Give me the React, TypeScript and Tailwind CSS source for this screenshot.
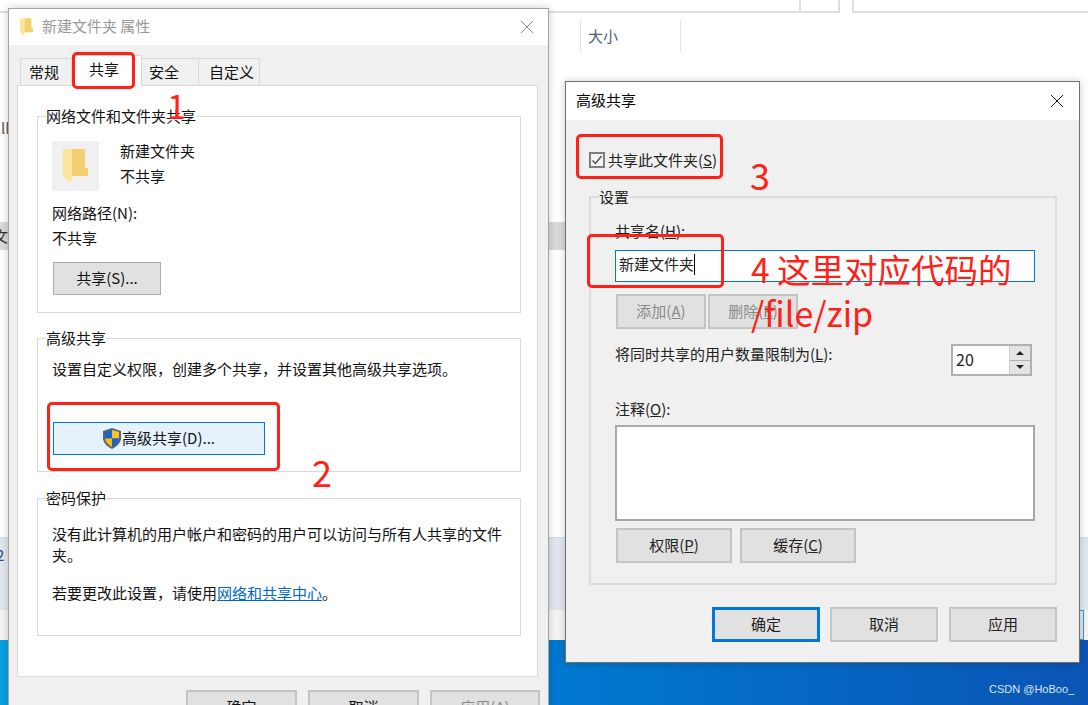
const fontClass = "font-['Noto_Sans_CJK_SC','Liberation_Sans',sans-serif]";

function FolderIcon({ className }: { className: string }) {
  return (
    <svg viewBox="0 0 25 34" className={className}>
      <path d="M8 0 H22 V18 L25 20 V27 H8 Z" fill="#f3d06f" />
      <path d="M0 0 H8 L9 2 V26 L8 34 L0 27 Z" fill="#fbe59a" />
    </svg>
  );
}

function ShieldIcon() {
  return (
    <svg viewBox="0 0 18 21" className="w-[18px] h-[21px] shrink-0">
      <path d="M9 0 L18 3 V11 Q17 17 9 21 Q1 17 0 11 V3 Z" fill="#5a6470" />
      <path d="M9 2 L2 4 V10.5 H9 Z" fill="#1567c0" />
      <path d="M9 2 L16 4 V10.5 H9 Z" fill="#fac42e" />
      <path d="M2 10.5 H9 V19 Q3 16 2 10.5 Z" fill="#f7bc20" />
      <path d="M16 10.5 H9 V19 Q15 16 16 10.5 Z" fill="#1567c0" />
    </svg>
  );
}

function CloseIcon({ color }: { color: string }) {
  return (
    <svg viewBox="0 0 14 14" className="w-[14px] h-[14px]">
      <path d="M1 1 L13 13 M13 1 L1 13" stroke={color} strokeWidth="1" fill="none" />
    </svg>
  );
}

function GroupBox({ title, className, children }: { title: string; className: string; children: React.ReactNode }) {
  return (
    <div className={`relative border ${className}`}>
      <span className="absolute left-[8px] top-[-12px] h-[22px] leading-[22px] bg-inherit">{title}</span>
      {children}
    </div>
  );
}

function GrayButton({ className, children }: { className: string; children: React.ReactNode }) {
  return (
    <div className={`flex items-center justify-center bg-[#e1e1e1] border-2 border-[#c4c4c4] ${className}`}>
      {children}
    </div>
  );
}

function RedBox({ className }: { className: string }) {
  return <div className={`absolute border-[3px] border-[#ff2116] rounded-[5px] ${className}`} />;
}

function RedText({ className, children }: { className: string; children: React.ReactNode }) {
  return <div className={`absolute text-[#ff2116] whitespace-nowrap ${className}`}>{children}</div>;
}

// 背景的资源管理器和桌面
function Backdrop() {
  return (
    <div className="flex flex-col h-full">
      <div className="h-[13px] shrink-0 flex">
        <div className="w-[840px] border-b-2 border-r-2 border-[#dedede] flex justify-end">
          <div className="w-[39px] border-l-2 border-[#dedede]" />
        </div>
        <div className="ml-[12px] flex-1 border-b-2 border-l-2 border-[#dedede]" />
      </div>
      <div className="h-[209px] shrink-0 pt-[7px] pl-[580px] relative">
        <span className="absolute left-[1px] top-[104px] text-[15px] leading-[22px] text-[#555555]">ll</span>
        <div className="w-[101px] h-[32px] border-x border-[#e5e5e5] pl-[7px] leading-[32px] text-[15px] text-[#4c607a]">
          大小
        </div>
      </div>
      <div className="h-[28px] w-[570px] shrink-0 bg-[#d9d9d9] text-[15px] leading-[28px] text-[#333] overflow-hidden">
        <span className="ml-[-7px]">文</span>
      </div>
      <div className="h-[287px] shrink-0" />
      <div className="h-[73px] shrink-0 bg-[#e2e7ef] border-t border-[#d4dae3] text-[15px] leading-[34px] text-[#2a4a78] overflow-hidden">
        <span className="ml-[-4px]">2</span>
      </div>
      <div className="h-[30px] shrink-0 bg-[#f4f4f4] flex justify-end">
        <div className="w-[5px] mr-[4px] bg-[#dfe8f0] border border-[#3d9ac4]" />
      </div>
      <div className="flex-1 bg-gradient-to-r from-[#0aa0e0] via-[#0078cf] via-[52%] to-[#0b54b4]" />
    </div>
  );
}

function PropertiesWindow() {
  return (
    <div className="absolute isolate left-[8px] top-[8px] w-[541px] h-[720px] border border-[#a3a3a3] bg-[#f0f0f0] shadow-[0_0_8px_rgba(0,0,0,0.2)]">
      <div className="h-[36px] bg-white flex items-center pl-[11px] pr-[14px]">
        <FolderIcon className="w-[13px] h-[18px] mt-[-1px]" />
        <span className="ml-[9px] mt-[-2px] text-[#999999]">新建文件夹 属性</span>
        <span className="ml-auto flex">
          <CloseIcon color="#8a8a8a" />
        </span>
      </div>

      <div className="h-[40px] flex items-end pl-[11px] relative z-10">
        <div className="w-[52px] h-[27px] bg-[#f0f0f0] border border-b-0 border-[#d9d9d9] leading-[26px] pl-[8px]">常规</div>
        <div className="w-[70px] h-[31px] mb-[-1px] bg-white border border-b-0 border-[#d9d9d9] leading-[26px] pl-[16px]">共享</div>
        <div className="w-[57px] h-[27px] bg-[#f0f0f0] border-r border-t border-[#d9d9d9] leading-[26px] pl-[7px]">安全</div>
        <div className="w-[61px] h-[27px] bg-[#f0f0f0] border-r border-t border-[#d9d9d9] leading-[26px] pl-[10px]">自定义</div>
      </div>

      <div className="ml-[8px] w-[521px] h-[592px] bg-white border border-[#d9d9d9] pl-[19px] pt-[30px]">
        <GroupBox title="网络文件和文件夹共享" className="w-[484px] h-[197px] border-[#d9d9d9] bg-white pl-[14px] pt-[24px]">
          <div className="flex">
            <div className="w-[47px] h-[50px] bg-[#f0f0f0] flex items-center justify-center">
              <FolderIcon className="w-[25px] h-[34px]" />
            </div>
            <div className="ml-[21px] mt-[-3px] leading-[25px]">
              <div>新建文件夹</div>
              <div>不共享</div>
            </div>
          </div>
          <div className="mt-[9px] leading-[25px]">
            <div>网络路径(N):</div>
            <div>不共享</div>
          </div>
          <GrayButton className="mt-[12px] ml-[1px] w-[108px] h-[33px] !border !border-[#adadad]">共享(S)...</GrayButton>
        </GroupBox>

        <GroupBox title="高级共享" className="mt-[25px] w-[484px] h-[134px] border-[#d9d9d9] bg-white pl-[14px] pt-[19px]">
          <div className="leading-[21px]">设置自定义权限，创建多个共享，并设置其他高级共享选项。</div>
          <div className="mt-[43px] ml-[1px] w-[212px] h-[33px] bg-[#e5f1fb] border border-[#0078d7] flex items-center justify-center gap-[1px]">
            <ShieldIcon />
            <span>高级共享(D)...</span>
          </div>
        </GroupBox>

        <GroupBox title="密码保护" className="mt-[26px] w-[484px] h-[138px] border-[#d9d9d9] bg-white pl-[14px] pt-[24px]">
          <div className="w-[452px] leading-[21px]">
            没有此计算机的用户帐户和密码的用户可以访问与所有人共享的文件夹。
          </div>
          <div className="mt-[18px] leading-[20px]">
            若要更改此设置，请使用<span className="text-[#0066cc] underline">网络和共享中心</span>。
          </div>
        </GroupBox>
      </div>

      <div className="mt-[13px] ml-[177px] flex gap-[11px]">
        <GrayButton className="w-[111px] h-[34px]">确定</GrayButton>
        <GrayButton className="w-[111px] h-[34px]">取消</GrayButton>
        <GrayButton className="w-[110px] h-[34px] bg-[#cccccc] border-[#bfbfbf] text-[#8a8a8a]">应用(A)</GrayButton>
      </div>
    </div>
  );
}

function AdvancedShareWindow() {
  return (
    <div className="absolute left-[565px] top-[81px] w-[515px] h-[582px] border border-[#6e6e6e] bg-[#f0f0f0] text-[#222222] shadow-[0_0_8px_rgba(0,0,0,0.2)]">
      <div className="h-[38px] bg-white flex items-center pl-[10px] pr-[15px]">
        <span className="text-black mt-[-2px]">高级共享</span>
        <span className="ml-auto flex">
          <CloseIcon color="#111111" />
        </span>
      </div>

      <div className="pl-[23px] pt-[33px]">
        <div className="flex items-center h-[16px] mt-[-1px]">
          <div className="w-[16px] h-[16px] border-2 border-[#7d7d7d] bg-[#f4f4f4] flex items-center justify-center">
            <svg viewBox="0 0 12 12" className="w-[12px] h-[12px]">
              <path d="M1.5 6.5 L4.5 9.5 L10.5 2" stroke="#555555" strokeWidth="1.5" fill="none" />
            </svg>
          </div>
          <span className="ml-[3px]">共享此文件夹(<u>S</u>)</span>
        </div>

        <GroupBox title="设置" className="mt-[28px] w-[468px] h-[389px] border-[#dcdcdc] bg-[#f0f0f0] pl-[24px] pt-[23px] !border-2">
          <div className="leading-[20px]">共享名(<u>H</u>):</div>
          <div className="mt-[9px] w-[420px] h-[32px] bg-white border border-[#0078d7] flex items-center pl-[3px]">
            <span className="mt-[-4px]">新建文件夹</span>
            <span className="w-px h-[21px] mt-[-4px] bg-black" />
          </div>
          <div className="mt-[12px] ml-[1px] flex gap-[2px] text-[#8a8a8a]">
            <GrayButton className="w-[90px] h-[35px] bg-[#cccccc] border-[#c4c4c4]">添加(<u>A</u>)</GrayButton>
            <GrayButton className="w-[90px] h-[35px] bg-[#cccccc] border-[#c4c4c4]">删除(<u>R</u>)</GrayButton>
          </div>
          <div className="mt-[15px] w-[417px] flex justify-between">
            <span className="leading-[20px]">将同时共享的用户数量限制为(<u>L</u>):</span>
            <div className="w-[81px] h-[32px] border-2 border-[#b0b0b0] bg-white flex">
              <span className="flex-1 pl-[3px] leading-[26px] text-[16px]">20</span>
              <div className="w-[21px] flex flex-col gap-[1px] bg-[#b0b0b0] border-l border-[#d0d0d0]">
                <div className="flex-1 bg-[#e4e4e4] flex items-center justify-center">
                  <div className="border-x-[4px] border-b-[4px] border-x-transparent border-b-[#222222]" />
                </div>
                <div className="flex-1 bg-[#e4e4e4] flex items-center justify-center">
                  <div className="border-x-[4px] border-t-[4px] border-x-transparent border-t-[#222222]" />
                </div>
              </div>
            </div>
          </div>
          <div className="mt-[23px] leading-[20px]">注释(<u>O</u>):</div>
          <div className="mt-[6px] w-[420px] h-[96px] bg-white border-2 border-[#a8a8a8]" />
          <div className="mt-[7px] ml-[1px] flex gap-[8px]">
            <GrayButton className="w-[116px] h-[35px]">权限(<u>P</u>)</GrayButton>
            <GrayButton className="w-[116px] h-[35px]">缓存(<u>C</u>)</GrayButton>
          </div>
        </GroupBox>

        <div className="mt-[22px] ml-[123px] flex gap-[10px]">
          <GrayButton className="w-[108px] h-[35px] !border-[#0078d7] !border-[3px]">确定</GrayButton>
          <GrayButton className="w-[108px] h-[35px]">取消</GrayButton>
          <GrayButton className="w-[108px] h-[35px] ml-[1px]">应用</GrayButton>
        </div>
      </div>
    </div>
  );
}

export default function App() {
  return (
    <div className={`relative w-[1088px] h-[705px] overflow-hidden bg-white text-[15px] text-[#111111] ${fontClass}`}>
      <Backdrop />
      <PropertiesWindow />
      <AdvancedShareWindow />

      {/* 红色标注 */}
      <RedBox className="left-[72px] top-[52px] w-[63px] h-[37px]" />
      <RedBox className="left-[47px] top-[402px] w-[233px] h-[69px]" />
      <RedBox className="left-[576px] top-[134px] w-[147px] h-[45px]" />
      <RedBox className="left-[587px] top-[234px] w-[137px] h-[54px]" />
      <RedText className="left-[167px] top-[82px] text-[34px] leading-[46px]">1</RedText>
      <RedText className="left-[312px] top-[447px] text-[36px] leading-[48px]">2</RedText>
      <RedText className="left-[750px] top-[150px] text-[36px] leading-[48px]">3</RedText>
      <RedText className="left-[751px] top-[246px] text-[33.5px] leading-[46px]">4 这里对应代码的</RedText>
      <RedText className="left-[751px] top-[290px] text-[34px] leading-[46px]">/file/zip</RedText>

      <div className="absolute left-[989px] top-[681px] text-[11px] leading-[16px] text-[#d5e6f5] font-['Liberation_Sans',sans-serif]">
        CSDN @HoBoo_
      </div>
    </div>
  );
}
